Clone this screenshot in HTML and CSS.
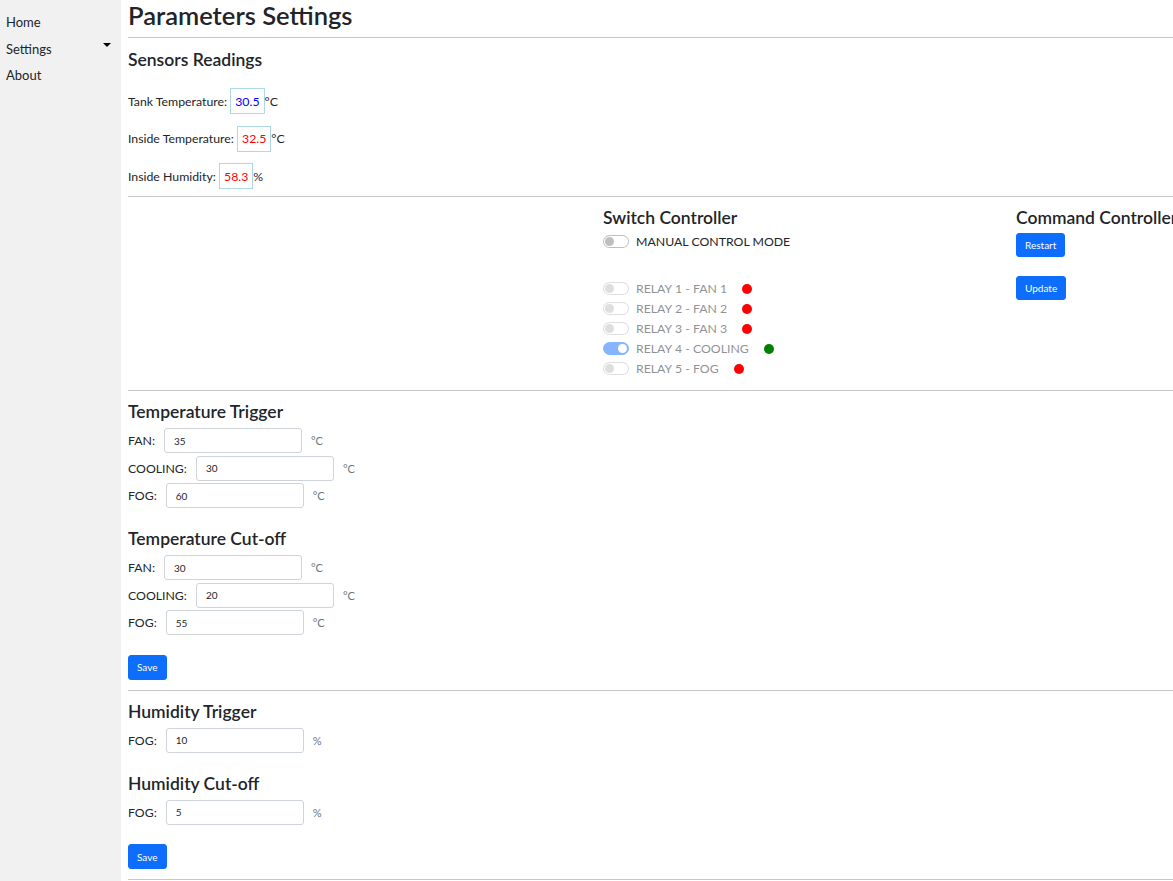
FILE: index.html
```html
<!DOCTYPE html>
<html lang="en">
<head>
<meta charset="utf-8">
<title>Parameters Settings</title>
<link rel="stylesheet" href="styles.css">
</head>
<body>
<div class="layout">
  <nav class="sidebar">
    <a class="nav-link" href="#">Home</a>
    <a class="nav-link dropdown" href="#">Settings <span class="caret"></span></a>
    <a class="nav-link" href="#">About</a>
  </nav>
  <main class="main">
    <h1 class="title">Parameters Settings</h1>
    <hr class="rule rule-title">

    <h2 class="section-title sensors-title">Sensors Readings</h2>
    <div class="readings">
      <div class="reading">Tank Temperature: <span class="value value-blue">30.5</span>°C</div>
      <div class="reading">Inside Temperature: <span class="value value-red">32.5</span>°C</div>
      <div class="reading">Inside Humidity: <span class="value value-red">58.3</span>%</div>
    </div>
    <hr class="rule rule-sensors">

    <div class="controllers">
      <div class="col col-empty"></div>
      <div class="col">
        <h2 class="section-title ctrl-title">Switch Controller</h2>
        <div class="switch-row manual">
          <span class="switch"></span><span class="switch-label">MANUAL CONTROL MODE</span>
        </div>
        <div class="relays">
          <div class="switch-row disabled"><span class="switch"></span><span class="switch-label">RELAY 1 - FAN 1</span><span class="dot dot-red"></span></div>
          <div class="switch-row disabled"><span class="switch"></span><span class="switch-label">RELAY 2 - FAN 2</span><span class="dot dot-red"></span></div>
          <div class="switch-row disabled"><span class="switch"></span><span class="switch-label">RELAY 3 - FAN 3</span><span class="dot dot-red"></span></div>
          <div class="switch-row disabled"><span class="switch on"></span><span class="switch-label">RELAY 4 - COOLING</span><span class="dot dot-green"></span></div>
          <div class="switch-row disabled"><span class="switch"></span><span class="switch-label">RELAY 5 - FOG</span><span class="dot dot-red"></span></div>
        </div>
      </div>
      <div class="col">
        <h2 class="section-title ctrl-title nowrap">Command Controller</h2>
        <div class="cmd-buttons">
          <button class="btn btn-cmd">Restart</button>
          <button class="btn btn-cmd">Update</button>
        </div>
      </div>
    </div>
    <hr class="rule rule-ctrl">

    <h2 class="section-title form-title">Temperature Trigger</h2>
    <div class="field"><label>FAN:</label><input class="input" value="35"><span class="unit">°C</span></div>
    <div class="field"><label>COOLING:</label><input class="input" value="30"><span class="unit">°C</span></div>
    <div class="field"><label>FOG:</label><input class="input" value="60"><span class="unit">°C</span></div>

    <h2 class="section-title form-title next">Temperature Cut-off</h2>
    <div class="field"><label>FAN:</label><input class="input" value="30"><span class="unit">°C</span></div>
    <div class="field"><label>COOLING:</label><input class="input" value="20"><span class="unit">°C</span></div>
    <div class="field"><label>FOG:</label><input class="input" value="55"><span class="unit">°C</span></div>
    <button class="btn btn-save">Save</button>
    <hr class="rule rule-form">

    <h2 class="section-title form-title first">Humidity Trigger</h2>
    <div class="field"><label>FOG:</label><input class="input" value="10"><span class="unit">%</span></div>

    <h2 class="section-title form-title next">Humidity Cut-off</h2>
    <div class="field"><label>FOG:</label><input class="input" value="5"><span class="unit">%</span></div>
    <button class="btn btn-save">Save</button>
    <hr class="rule rule-form">
  </main>
</div>
</body>
</html>
```
FILE: styles.css
```css
html, body {
  margin: 0;
  padding: 0;
  overflow: hidden;
}
body {
  font-family: Lato, "Noto Sans", sans-serif;
  font-size: 12.3px;
  color: #212529;
  background: #fff;
}
.layout {
  display: flex;
  min-height: 881px;
}
.sidebar {
  width: 121px;
  flex: 0 0 121px;
  background: #f1f1f1;
  display: flex;
  flex-direction: column;
  padding-top: 9px;
}
.nav-link {
  display: flex;
  align-items: center;
  color: #212529;
  text-decoration: none;
  font-size: 13px;
  line-height: 26.5px;
  padding-left: 6px;
  padding-right: 10px;
}
.dropdown {
  justify-content: space-between;
}
.caret {
  display: inline-block;
  width: 0;
  height: 0;
  border-top: 4px solid #000;
  border-left: 4px solid transparent;
  border-right: 4px solid transparent;
  margin-top: -7px;
}
.main {
  flex: 1;
  min-width: 0;
  padding-left: 7px;
  overflow: hidden;
}
.title {
  margin: 0;
  padding-top: 1px;
  font-size: 25.5px;
  font-weight: 600;
  line-height: 29px;
}
.rule {
  border: 0;
  border-top: 1px solid #c8c8c8;
  margin: 0;
}
.rule-title { margin-top: 7px; }
.section-title {
  margin: 0;
  font-size: 17.5px;
  font-weight: 600;
  line-height: 22px;
}
.sensors-title { margin-top: 11px; margin-bottom: 17px; }
.readings {
  display: flex;
  flex-direction: column;
  gap: 11.5px;
}
.reading {
  display: flex;
  align-items: center;
  height: 26px;
  white-space: pre;
}
.value {
  display: inline-flex;
  align-items: center;
  height: 24px;
  padding: 0 4px;
  border: 1px solid #add8e6;
}
.value-blue { color: #0000ff; }
.value-red { color: #ff0000; }
.rule-sensors { margin-top: 7px; }
.controllers {
  display: grid;
  grid-template-columns: 475px 413px 1fr;
}
.ctrl-title { margin-top: 10px; }
.nowrap { white-space: nowrap; }
.switch-row {
  display: flex;
  align-items: center;
  height: 20px;
}
.manual { margin-top: 2px; }
.relays { margin-top: 27px; }
.switch {
  position: relative;
  box-sizing: border-box;
  width: 26px;
  height: 13px;
  border: 1px solid rgba(0,0,0,.25);
  border-radius: 7px;
  background: #fff;
  margin-right: 7px;
}
.switch::after {
  content: "";
  position: absolute;
  left: 1px;
  top: 1px;
  width: 9px;
  height: 9px;
  border-radius: 50%;
  background: rgba(0,0,0,.25);
}
.switch.on {
  background: #0d6efd;
  border-color: #0d6efd;
}
.switch.on::after {
  left: auto;
  right: 1px;
  background: #fff;
}
.disabled .switch { opacity: .5; }
.disabled .switch-label { opacity: .5; }
.dot {
  width: 10px;
  height: 10px;
  border-radius: 50%;
  margin-left: 15px;
  margin-top: 2px;
}
.dot-red { background: #ff0000; }
.dot-green { background: #008000; }
.cmd-buttons {
  display: flex;
  flex-direction: column;
  align-items: flex-start;
  gap: 19px;
  margin-top: 4px;
}
.btn {
  font-family: inherit;
  font-size: 10px;
  color: #fff;
  background: #0d6efd;
  border: 1px solid #0d6efd;
  border-radius: 3px;
  padding: 0 8px;
  cursor: pointer;
}
.btn-cmd { height: 24px; }
.rule-ctrl { margin-top: 12px; }
.form-title { margin-top: 10px; margin-bottom: 5px; }
.form-title.next { margin-top: 20px; }
.form-title.first { margin-top: 10px; }
.field {
  display: flex;
  align-items: center;
  height: 25px;
  margin-bottom: 2.5px;
}
.field label {
  margin-right: 9px;
}
.input {
  box-sizing: border-box;
  width: 138px;
  height: 25px;
  border: 1px solid #ced4da;
  border-radius: 3px;
  padding: 0 9px;
  font-family: inherit;
  font-size: 10px;
  color: #212529;
  margin-right: 9px;
}
.unit {
  font-size: 11px;
  color: #6c757d;
}
.btn-save {
  height: 25px;
  margin-top: 19.5px;
  display: block;
}
.rule-form { margin-top: 10px; }
```
